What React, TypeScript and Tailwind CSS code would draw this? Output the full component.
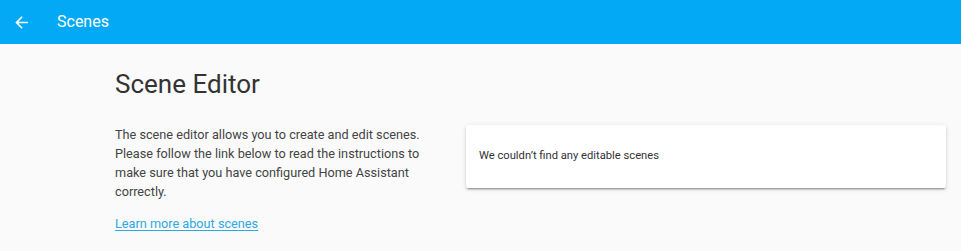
import React from 'react';

function ArrowLeft() {
  return (
    <svg viewBox="0 0 24 24" className="w-[19px] h-[19px]" fill="currentColor">
      <path d="M20,11V13H8L13.5,18.5L12.08,19.92L4.16,12L12.08,4.08L13.5,5.5L8,11H20Z" />
    </svg>
  );
}

export default function App() {
  return (
    <div className="min-h-[251px] bg-[#fafafa] font-['Roboto',sans-serif]">
      {/* Toolbar */}
      <div className="h-[44px] bg-[#03a9f4] flex items-center text-white">
        <button className="w-[42px] h-[44px] flex items-center justify-center pl-[1px]">
          <ArrowLeft />
        </button>
        <div className="ml-[15px] text-[16px] leading-none">Scenes</div>
      </div>

      {/* Content */}
      <div className="pl-[115px] pr-[15px]">
        <h1 className="mt-[24px] text-[26px] leading-[32px] text-[#333333] font-normal">Scene Editor</h1>

        <div className="mt-[25px] flex">
          <div className="w-[325px] shrink-0 text-[12.7px] leading-[19px] text-[#444444]">
            <p>
              The scene editor allows you to create and edit scenes. Please follow the link below to read the
              instructions to make sure that you have configured Home Assistant correctly.
            </p>
            <a href="#" className="block mt-[13px] text-[#2ca9e1] underline underline-offset-2">
              Learn more about scenes
            </a>
          </div>

          <div className="ml-[26px] flex-1 h-[63px] bg-white rounded-[2px] flex items-center px-[13px] shadow-[0_2px_2px_0_rgba(0,0,0,0.14),0_1px_5px_0_rgba(0,0,0,0.12),0_3px_1px_-2px_rgba(0,0,0,0.2)]">
            <span className="text-[11.2px] text-[#333333]">We couldn’t find any editable scenes</span>
          </div>
        </div>
      </div>
    </div>
  );
}
